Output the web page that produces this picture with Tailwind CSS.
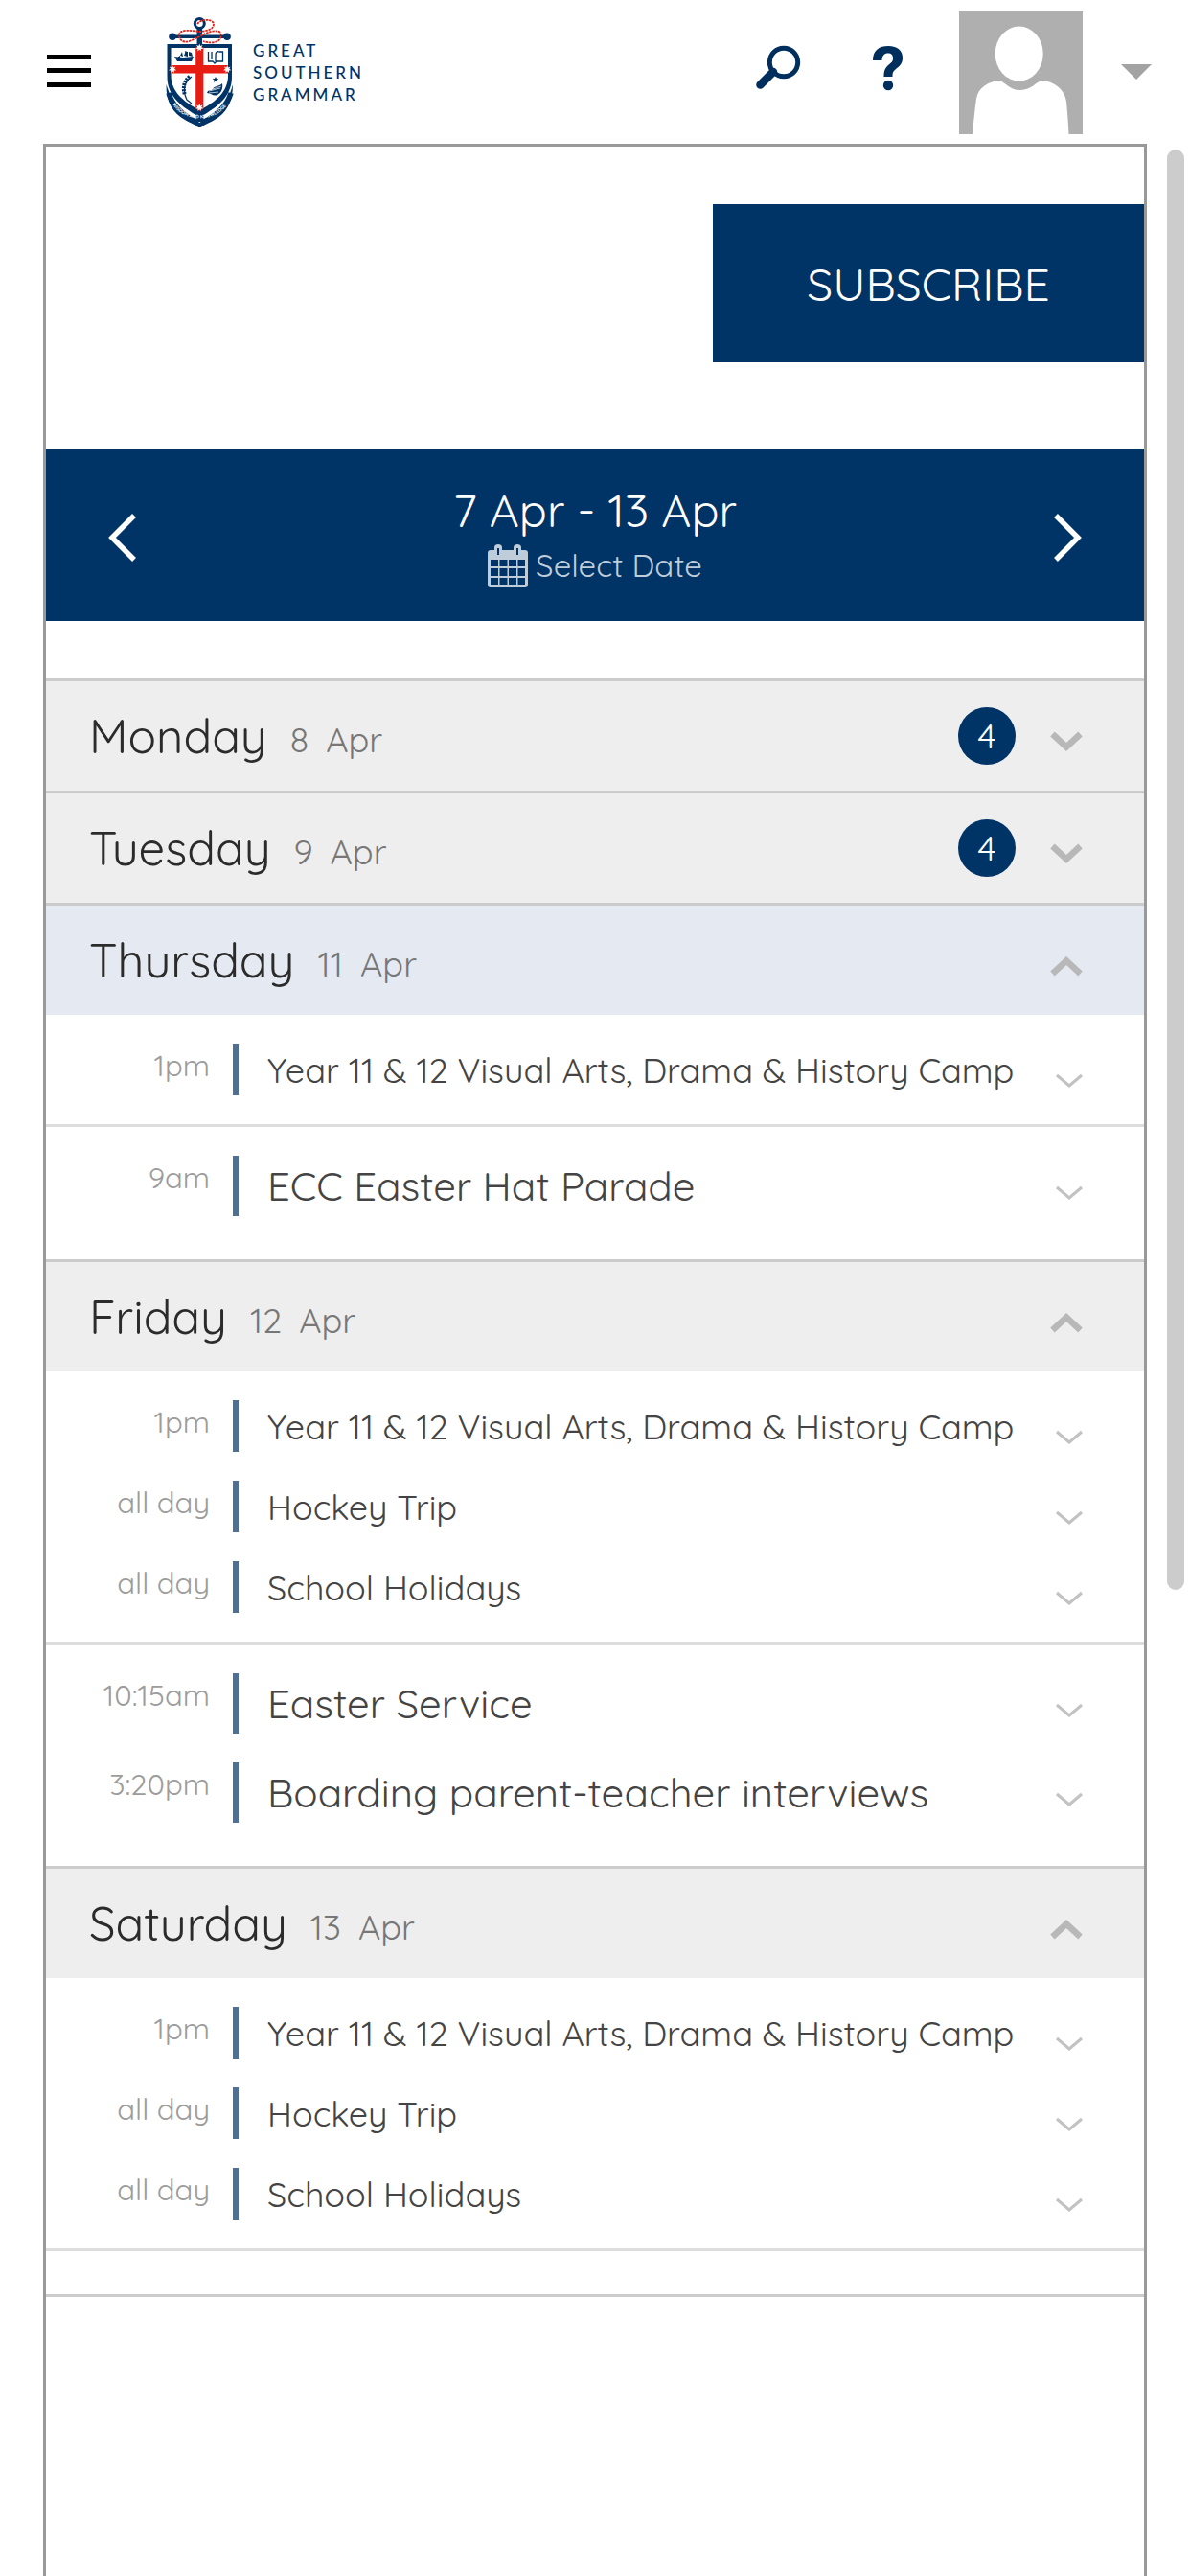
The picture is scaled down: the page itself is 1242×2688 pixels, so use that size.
<!DOCTYPE html>
<html lang="en">
<head>
<meta charset="utf-8">
<meta name="viewport" content="width=device-width, initial-scale=1">
<title>Calendar - Great Southern Grammar</title>
<script src="https://cdn.jsdelivr.net/npm/@tailwindcss/browser@4"></script>
</head>
<body class="relative flex min-h-screen flex-col bg-white font-['Quicksand','Lato',sans-serif] font-normal text-[#444]">

<svg class="hidden" aria-hidden="true">
  <symbol id="day-down" viewBox="0 0 34 22"><path d="M2.500 3 17 16.500 31.500 3" fill="none" stroke="#b8b8b8" stroke-width="6.500"/></symbol>
  <symbol id="day-up" viewBox="0 0 34 22"><path d="M2.500 19 17 5.500 31.500 19" fill="none" stroke="#b8b8b8" stroke-width="6.500"/></symbol>
  <symbol id="event-down" viewBox="0 0 28 16"><path d="M1 2 14 13 27 2" fill="none" stroke="#c2c2c2" stroke-width="3"/></symbol>
  <symbol id="star" viewBox="-5 -5 10 10"><path d="M0-5 1-2 3.900-3.100 2.300-.5 4.900 1.100 1.900 1.400 2.200 4.500 0 2.400-2.200 4.500-1.900 1.400-4.900 1.100-2.300-.5-3.900-3.100-1-2Z" fill="#fff"/></symbol>
</svg>

<header class="flex h-[150px] items-center pl-12 pr-10">
  <button type="button" aria-label="Menu" class="shrink-0">
    <svg class="block h-12 w-12" viewBox="0 0 48 48"><path d="M1 8.500H47M1 22.500H47M1 37.500H47" stroke="#000" stroke-width="5"/></svg>
  </button>
  <a href="#" aria-label="Great Southern Grammar" class="mb-1 ml-16 flex shrink-0 items-center gap-2">
    <svg class="block h-[130px] w-24" viewBox="0 0 96 130">
      <path d="M13.500 80C17 92 22 101 33 110 41 115 45 117 48.300 120 52 117 56 115 64 110 75 101 80 92 83 80 83 99 76 110 64 117 57 121 51 123 48.300 124.500 46 123 40 121 33 117 21 110 13 99 13.500 80Z" fill="#036"/>
      <path d="M14.500 38H82V72C82 90 71 101 52.500 112V119H44.500V112C26 101 14.500 90 14.500 72Z" fill="#036"/>
      <path d="M18.500 42H78V71C78 87 66 98 48.300 107 31 98 18.500 87 18.500 71Z" fill="#fff"/>
      <path d="M44.200 41H52.400V105L48.300 108 44.200 105ZM18.500 60H78V68.500H18.500Z" fill="#e71d14"/>
      <path d="M16 89C20 103 31 112 46 120.500M81 89C77 103 66 112 51 120.500" fill="none" stroke="#036" stroke-width="5.500"/>
      <path id="motto" d="M20 101C32 120 64 121 78 100" fill="none"/>
      <text class="font-bold" font-size="5" fill="#fff"><textPath href="#motto">WISDOM AND KNOWLEDGE</textPath></text>
      <circle cx="48.300" cy="16.500" r="5" fill="none" stroke="#036" stroke-width="3"/>
      <path d="M48.300 21V38" stroke="#036" stroke-width="5.500"/>
      <path d="M20 30.200H77" stroke="#036" stroke-width="3.400"/>
      <circle cx="20" cy="30.200" r="3.800" fill="#036"/><circle cx="77" cy="30.200" r="3.800" fill="#036"/>
      <g fill="none" stroke="#e2231a" stroke-width="1.800" stroke-dasharray="2.500 .8">
        <path d="M46 17C49 12 62 11 63 17 63 23 56 24 49 25 40 24 28 22 27 28 27 36 34 37 40 34 50 30 60 22 69 25 73 29 70 35 64 36 59 37 55 36 52 35"/>
      </g>
      <g fill="#036">
        <path d="M22 51 31 52 42 51 40 56H25ZM28 50 30 46 31 51ZM32 50C34 46 33 45 32 45L36 46 36 51ZM37 50 37 46 40 47 41 51ZM23 53 28 50 28 53Z"/>
        <path d="M65 72 66 74 68.300 74 66.500 75.500 67.200 78 65 76.500 62.800 78 63.500 75.500 61.700 74 64 74Z"/>
        <path d="M56 89C58 84 60 88 62 85 64 81 68 83 72 79 73 84 71 89 67 91 63 93 60 89 56 89Z"/>
      </g>
      <path d="M57.500 46V56H62L64 58 66 56H72.500V46H69C66 45 65 47 65 49V56M61 46V54" fill="none" stroke="#036" stroke-width="1.300"/>
      <path d="M58 87 70 84M58 89 68 88M62 85 71 82" stroke="#fff" stroke-width=".7"/>
      <path d="M40 72C31 78 31 88 35 96L40 100" fill="none" stroke="#036" stroke-width="1.200"/>
      <path d="M38 72C31 77 31 86 33 91" fill="none" stroke="#036" stroke-width="4" stroke-dasharray="2 1"/>
      <g><use href="#star" x="44" y="37.500" width="8.500" height="8.500"/><use href="#star" x="15.800" y="60" width="8.500" height="8.500"/><use href="#star" x="73" y="60" width="8.500" height="8.500"/><use href="#star" x="44" y="100" width="8.500" height="8.500"/></g>
    </svg>
    <span class="mt-1 block font-['Lato',sans-serif] text-[17px] leading-[23px] font-medium tracking-[3px] text-[#036]">GREAT<br>SOUTHERN<br>GRAMMAR</span>
  </a>
  <div class="ml-auto flex shrink-0 items-center">
    <button type="button" aria-label="Search" class="mr-[75px] mb-2">
      <svg class="block h-12 w-12" viewBox="0 0 48 48"><circle cx="30" cy="18" r="14.700" fill="none" stroke="#002e5d" stroke-width="5"/><path d="M19 28 5.500 41.500" stroke="#002e5d" stroke-width="8.500" stroke-linecap="round"/></svg>
    </button>
    <button type="button" aria-label="Help" class="mr-[58px] mb-2">
      <svg class="block h-12 w-8" viewBox="0 0 32 48"><path d="M0 16C0 5 7 1 16 1 26 1 31 6 31 13.500 31 19 28 22 24 25 21 27.500 20.500 29 20.500 33H11.500C11.500 27 12.500 24.500 16 21 19 18.500 21 17.500 21 14 21 10 19 8.500 16 8.500 12 8.500 9.500 11 9.500 16Z" fill="#002e5d"/><circle cx="16" cy="42" r="5.200" fill="#002e5d"/></svg>
    </button>
    <button type="button" aria-label="Account" class="flex items-center gap-10">
      <svg class="block h-[129px] w-[129px]" viewBox="0 0 129 129"><path d="M0 0H129V129H0Z" fill="#afafaf"/><ellipse cx="62.700" cy="45" rx="25" ry="28.500" fill="#fff"/><path d="M14 129C15 116 17 100 18 92 20 80 31 74 42 73 49 75 52 83 64 83 76 83 80 74 87 73 99 74 110 82 112 95 113 105 114 118 114.500 129Z" fill="#fff"/></svg>
      <svg class="block h-4 w-8" viewBox="0 0 32 16"><path d="M0 0H32L16 16Z" fill="#a3a3a3"/></svg>
    </button>
  </div>
</header>

<main class="mx-[45px] flex-1 border-3 border-b-0 border-[#999]">
  <div class="flex justify-end pt-[60px] pb-[90px]">
    <button type="button" class="h-[165px] w-[450px] bg-[#036] text-5xl text-white">SUBSCRIBE</button>
  </div>

  <nav aria-label="Week" class="flex h-[180px] items-center justify-between bg-[#036] px-16 text-white">
    <button type="button" aria-label="Previous week"><svg class="mt-1.5 block h-[50px] w-8" viewBox="0 0 32 50"><path d="M28 2 5 25 28 48" fill="none" stroke="#fff" stroke-width="5.500"/></svg></button>
    <div class="pt-1 text-center">
      <p class="text-5xl leading-[60px]">7 Apr - 13 Apr</p>
      <button type="button" class="flex w-full items-center justify-center gap-2 text-[33px] leading-[56px] text-[#bfccd9]">
        <svg class="block h-[45px] w-[42px]" viewBox="0 0 42 45"><path fill-rule="evenodd" d="M3 6H7V3C7 -1 15 -1 15 3V6H27V3C27 -1 35 -1 35 3V6H39Q42 6 42 9V42Q42 45 39 45H3Q0 45 0 42V9Q0 6 3 6ZM10 4V11H12V4ZM30 4V11H32V4ZM3 16V23H11V16ZM12.500 16V23H20.500V16ZM22 16V23H30V16ZM31.500 16V23H39V16ZM3 25V33H11V25ZM12.500 25V33H20.500V25ZM22 25V33H30V25ZM31.500 25V33H39V25ZM3 35V42H11V35ZM12.500 35V42H20.500V35ZM22 35V42H30V35ZM31.500 35V42H39V35Z" fill="#bfccd9"/></svg>
        Select Date
      </button>
    </div>
    <button type="button" aria-label="Next week"><svg class="mt-1.5 block h-[50px] w-8" viewBox="0 0 32 50"><path d="M4 2 27 25 4 48" fill="none" stroke="#fff" stroke-width="5.500"/></svg></button>
  </nav>

  <div class="mt-[60px] border-b-3 border-[#ccc]">
    <section class="border-t-3 border-[#ccc]">
      <h2><button type="button" aria-expanded="false" class="flex h-[114px] w-full items-center bg-[#eee] pr-16 pl-[45px]">
        <span class="text-[49px] text-[#2b2b2b]">Monday</span><span class="mt-2 ml-6 flex gap-[18px] text-4xl text-[#777]"><span>8</span><span>Apr</span></span>
        <span class="mr-9 ml-auto size-[60px] rounded-full bg-[#036] text-4xl leading-[60px] text-white">4</span>
        <svg class="mt-3 h-[22px] w-[34px]"><use href="#day-down"/></svg>
      </button></h2>
    </section>

    <section class="border-t-3 border-[#ccc]">
      <h2><button type="button" aria-expanded="false" class="flex h-[114px] w-full items-center bg-[#eee] pr-16 pl-[45px]">
        <span class="text-[49px] text-[#2b2b2b]">Tuesday</span><span class="mt-2 ml-6 flex gap-[18px] text-4xl text-[#777]"><span>9</span><span>Apr</span></span>
        <span class="mr-9 ml-auto size-[60px] rounded-full bg-[#036] text-4xl leading-[60px] text-white">4</span>
        <svg class="mt-3 h-[22px] w-[34px]"><use href="#day-down"/></svg>
      </button></h2>
    </section>

    <section class="border-t-3 border-[#ccc]">
      <h2><button type="button" aria-expanded="true" class="flex h-[114px] w-full items-center bg-[#e5e9f1] pr-16 pl-[45px]">
        <span class="text-[49px] text-[#2b2b2b]">Thursday</span><span class="mt-2 ml-6 flex gap-[18px] text-4xl text-[#777]"><span>11</span><span>Apr</span></span>
        <svg class="mt-3 ml-auto h-[22px] w-[34px]"><use href="#day-up"/></svg>
      </button></h2>
      <div class="flex flex-col gap-[30px] border-b-3 border-[#ddd] py-[30px] text-4xl leading-[52px]">
        <button type="button" class="flex w-full items-start pr-16 text-left"><span class="w-[171px] text-right text-[31px] leading-[45px] text-[#9c9c9c]">1pm</span><span class="ml-6 flex-1 border-l-6 border-[#4d7094] pt-0.5 pl-[30px]">Year 11 &amp; 12 Visual Arts, Drama &amp; History Camp</span><svg class="mt-[31px] h-4 w-7"><use href="#event-down"/></svg></button>
      </div>
      <div class="flex flex-col gap-[30px] pt-[30px] pb-[45px] text-[42px] leading-[63px]">
        <button type="button" class="flex w-full items-start pr-16 text-left"><span class="w-[171px] text-right text-[31px] leading-[45px] text-[#9c9c9c]">9am</span><span class="ml-6 flex-1 border-l-6 border-[#4d7094] pl-[30px]">ECC Easter Hat Parade</span><svg class="mt-[31px] h-4 w-7"><use href="#event-down"/></svg></button>
      </div>
    </section>

    <section class="border-t-3 border-[#ccc]">
      <h2><button type="button" aria-expanded="true" class="flex h-[114px] w-full items-center bg-[#eee] pr-16 pl-[45px]">
        <span class="text-[49px] text-[#2b2b2b]">Friday</span><span class="mt-2 ml-6 flex gap-[18px] text-4xl text-[#777]"><span>12</span><span>Apr</span></span>
        <svg class="mt-3 ml-auto h-[22px] w-[34px]"><use href="#day-up"/></svg>
      </button></h2>
      <div class="flex flex-col gap-[30px] border-b-3 border-[#ddd] py-[30px] text-4xl leading-[52px]">
        <button type="button" class="flex w-full items-start pr-16 text-left"><span class="w-[171px] text-right text-[31px] leading-[45px] text-[#9c9c9c]">1pm</span><span class="ml-6 flex-1 border-l-6 border-[#4d7094] pt-0.5 pl-[30px]">Year 11 &amp; 12 Visual Arts, Drama &amp; History Camp</span><svg class="mt-[31px] h-4 w-7"><use href="#event-down"/></svg></button>
        <button type="button" class="flex w-full items-start pr-16 text-left"><span class="w-[171px] text-right text-[31px] leading-[45px] text-[#9c9c9c]">all day</span><span class="ml-6 flex-1 border-l-6 border-[#4d7094] pt-0.5 pl-[30px]">Hockey Trip</span><svg class="mt-[31px] h-4 w-7"><use href="#event-down"/></svg></button>
        <button type="button" class="flex w-full items-start pr-16 text-left"><span class="w-[171px] text-right text-[31px] leading-[45px] text-[#9c9c9c]">all day</span><span class="ml-6 flex-1 border-l-6 border-[#4d7094] pt-0.5 pl-[30px]">School Holidays</span><svg class="mt-[31px] h-4 w-7"><use href="#event-down"/></svg></button>
      </div>
      <div class="flex flex-col gap-[30px] pt-[30px] pb-[45px] text-[42px] leading-[63px]">
        <button type="button" class="flex w-full items-start pr-16 text-left"><span class="w-[171px] text-right text-[31px] leading-[45px] text-[#9c9c9c]">10:15am</span><span class="ml-6 flex-1 border-l-6 border-[#4d7094] pl-[30px]">Easter Service</span><svg class="mt-[31px] h-4 w-7"><use href="#event-down"/></svg></button>
        <button type="button" class="flex w-full items-start pr-16 text-left"><span class="w-[171px] text-right text-[31px] leading-[45px] text-[#9c9c9c]">3:20pm</span><span class="ml-6 flex-1 border-l-6 border-[#4d7094] pl-[30px]">Boarding parent-teacher interviews</span><svg class="mt-[31px] h-4 w-7"><use href="#event-down"/></svg></button>
      </div>
    </section>

    <section class="border-t-3 border-[#ccc] pb-[45px]">
      <h2><button type="button" aria-expanded="true" class="flex h-[114px] w-full items-center bg-[#eee] pr-16 pl-[45px]">
        <span class="text-[49px] text-[#2b2b2b]">Saturday</span><span class="mt-2 ml-6 flex gap-[18px] text-4xl text-[#777]"><span>13</span><span>Apr</span></span>
        <svg class="mt-3 ml-auto h-[22px] w-[34px]"><use href="#day-up"/></svg>
      </button></h2>
      <div class="flex flex-col gap-[30px] border-b-3 border-[#ddd] py-[30px] text-4xl leading-[52px]">
        <button type="button" class="flex w-full items-start pr-16 text-left"><span class="w-[171px] text-right text-[31px] leading-[45px] text-[#9c9c9c]">1pm</span><span class="ml-6 flex-1 border-l-6 border-[#4d7094] pt-0.5 pl-[30px]">Year 11 &amp; 12 Visual Arts, Drama &amp; History Camp</span><svg class="mt-[31px] h-4 w-7"><use href="#event-down"/></svg></button>
        <button type="button" class="flex w-full items-start pr-16 text-left"><span class="w-[171px] text-right text-[31px] leading-[45px] text-[#9c9c9c]">all day</span><span class="ml-6 flex-1 border-l-6 border-[#4d7094] pt-0.5 pl-[30px]">Hockey Trip</span><svg class="mt-[31px] h-4 w-7"><use href="#event-down"/></svg></button>
        <button type="button" class="flex w-full items-start pr-16 text-left"><span class="w-[171px] text-right text-[31px] leading-[45px] text-[#9c9c9c]">all day</span><span class="ml-6 flex-1 border-l-6 border-[#4d7094] pt-0.5 pl-[30px]">School Holidays</span><svg class="mt-[31px] h-4 w-7"><use href="#event-down"/></svg></button>
      </div>
    </section>
  </div>
</main>

<!-- Overlay scrollbar thumb -->
<div aria-hidden="true" class="absolute top-[156px] right-1.5 h-[1503px] w-[18px] rounded-full bg-[#ccc]"></div>
</body>
</html>
